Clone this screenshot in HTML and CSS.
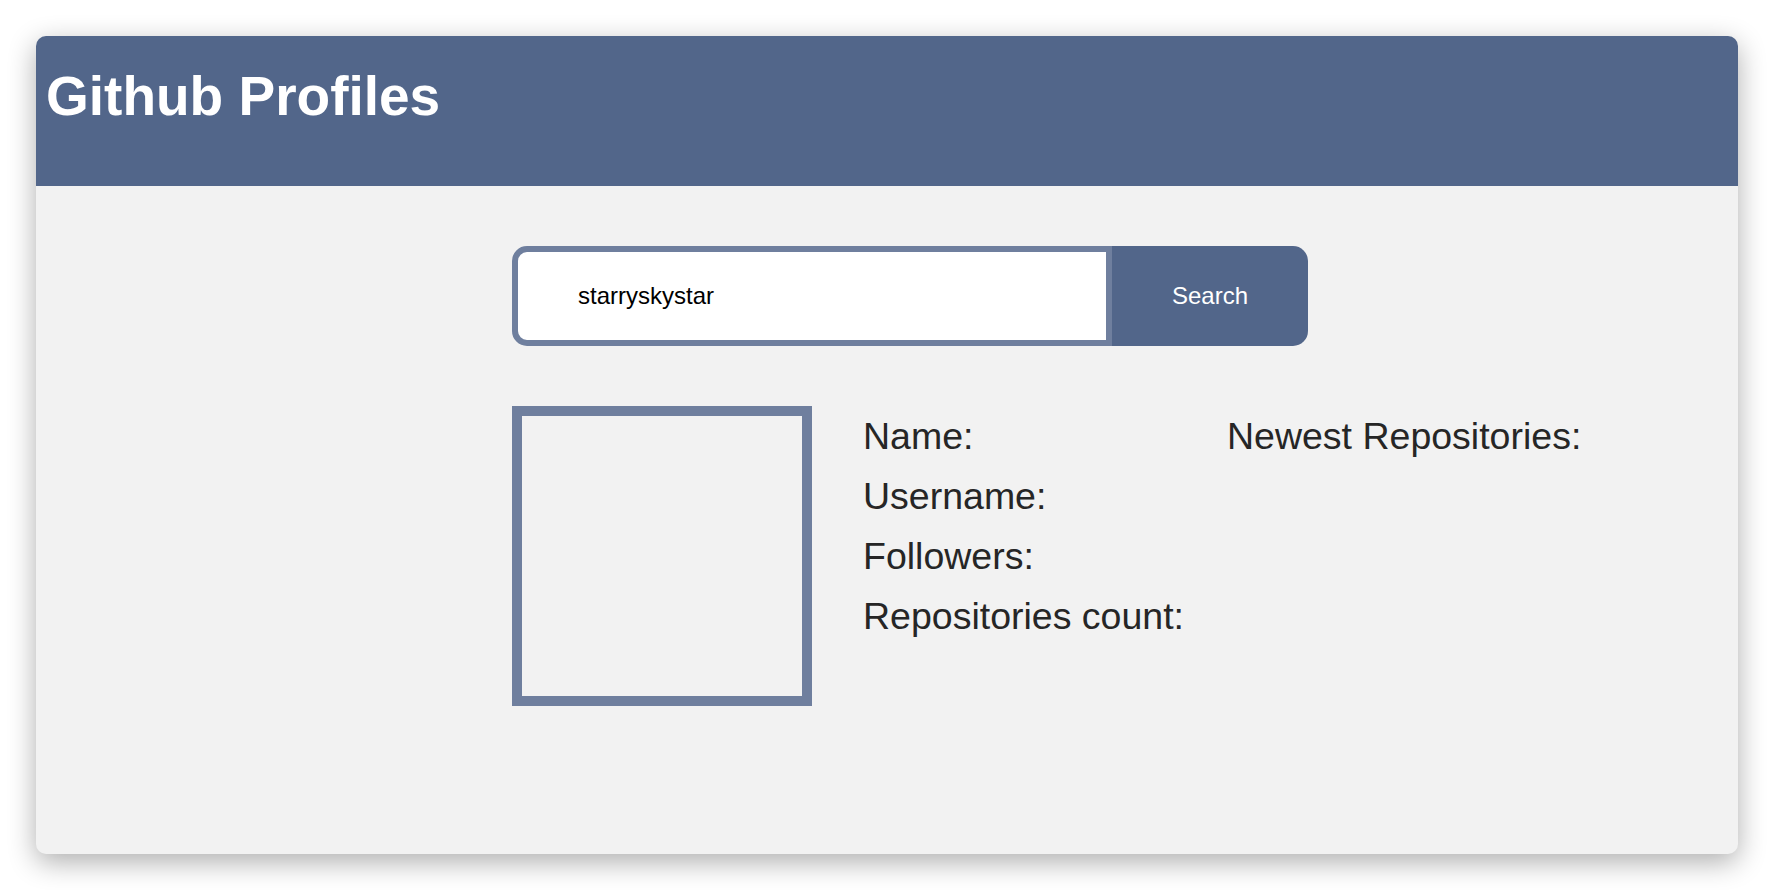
FILE: index.html
```html
<!DOCTYPE html>
<html lang="en">
<head>
<meta charset="utf-8">
<title>Github Profiles</title>
<link rel="stylesheet" href="styles.css">
</head>
<body>
<div class="card">
  <header class="header">
    <h1 class="title">Github Profiles</h1>
  </header>
  <main class="content">
    <form class="search">
      <input class="search-input" type="text" value="starryskystar">
      <button class="search-btn" type="button">Search</button>
    </form>
    <section class="profile">
      <div class="avatar"></div>
      <div class="info">
        <div class="line">Name:</div>
        <div class="line">Username:</div>
        <div class="line">Followers:</div>
        <div class="line">Repositories count:</div>
      </div>
      <div class="repos">
        <div class="line">Newest Repositories:</div>
      </div>
    </section>
  </main>
</div>
</body>
</html>
```

FILE: styles.css
```css
* { box-sizing: border-box; }
html, body { margin: 0; padding: 0; }
body {
  background: #ffffff;
  font-family: "Liberation Sans", Arial, sans-serif;
  padding: 36px;
  height: 890px;
  overflow: hidden;
}
.card {
  height: 818px;
  background: #f2f2f2;
  border-radius: 10px;
  overflow: hidden;
  box-shadow: 0 8px 28px rgba(0, 0, 0, 0.32);
}
.header {
  height: 150px;
  background: #52668a;
  padding: 28px 0 0 10px;
}
.title {
  margin: 0;
  color: #ffffff;
  font-size: 55px;
  line-height: 64px;
  font-weight: bold;
}
.content {
  padding: 60px 0 0 476px;
}
.search {
  display: flex;
  height: 100px;
  margin: 0;
}
.search-input {
  width: 600px;
  height: 100px;
  border: 6px solid #6f7f9e;
  border-radius: 15px 0 0 15px;
  background: #ffffff;
  padding: 0 0 0 60px;
  font-family: "Liberation Sans", Arial, sans-serif;
  font-size: 24px;
  color: #000000;
  outline: none;
}
.search-btn {
  width: 196px;
  height: 100px;
  border: none;
  border-radius: 0 15px 15px 0;
  background: #52668a;
  color: #ffffff;
  font-family: "Liberation Sans", Arial, sans-serif;
  font-size: 24px;
  padding: 0;
}
.profile {
  display: flex;
  align-items: flex-start;
  margin-top: 60px;
}
.avatar {
  width: 300px;
  height: 300px;
  border: 10px solid #6f7f9e;
  flex: none;
}
.info {
  width: 364px;
  margin-left: 51px;
  flex: none;
}
.line {
  font-size: 37.5px;
  line-height: 60px;
  color: #262626;
}
```
